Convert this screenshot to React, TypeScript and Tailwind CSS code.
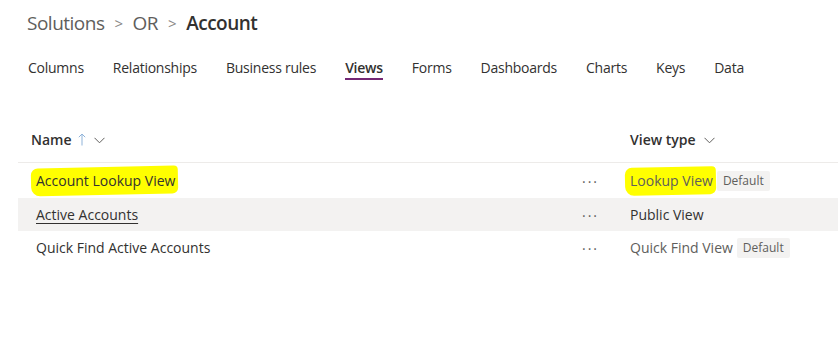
import React from 'react';

const TABS = ['Columns', 'Relationships', 'Business rules', 'Views', 'Forms', 'Dashboards', 'Charts', 'Keys', 'Data'];

type Row = { name: string; type: string; isDefault: boolean; highlight?: boolean; hovered?: boolean; typeMuted?: boolean };

const ROWS: Row[] = [
  { name: 'Account Lookup View', type: 'Lookup View', isDefault: true, highlight: true, typeMuted: true },
  { name: 'Active Accounts', type: 'Public View', isDefault: false, hovered: true },
  { name: 'Quick Find Active Accounts', type: 'Quick Find View', isDefault: true, typeMuted: true },
];

function ChevronDown() {
  return (
    <svg width="11" height="7" viewBox="0 0 11 7" fill="none" className="ml-[8px] mt-[1px]">
      <path d="M0.5 0.8 L5.5 5.8 L10.5 0.8" stroke="#605e5c" strokeWidth="1" />
    </svg>
  );
}

function SortUp() {
  return (
    <svg width="8" height="13" viewBox="0 0 8 13" fill="none" className="ml-[6px]">
      <path d="M4 12.5 V1 M0.8 4.2 L4 1 L7.2 4.2" stroke="#8fb3d9" strokeWidth="1" />
    </svg>
  );
}

function Marker({ children }: { children: React.ReactNode }) {
  return (
    <span className="relative inline-block">
      <span className="absolute left-[-5px] right-[-3px] top-[-3px] bottom-[-4px] bg-[#ffff00] rounded-[7px_4px_6px_9px] -rotate-[1.2deg]" />
      <span className="relative">{children}</span>
    </span>
  );
}

export default function App() {
  return (
    <div
      className="w-[838px] h-[361px] bg-white overflow-hidden pt-[9px]"
      style={{ fontFamily: '"Segoe UI", "Open Sans", sans-serif' }}
    >
      {/* Breadcrumb */}
      <div className="flex items-center pl-[27px] text-[19px] leading-[28px] tracking-[-0.5px] text-[#605e5c]">
        <span>Solutions</span>
        <span className="mx-[10px] text-[15px] text-[#8a8886]">&gt;</span>
        <span>OR</span>
        <span className="mx-[10px] text-[15px] text-[#8a8886]">&gt;</span>
        <span className="font-semibold text-[#323130]">Account</span>
      </div>

      {/* Tabs */}
      <div className="flex gap-[29px] pl-[28px] mt-[21px] text-[14px] leading-[20px] tracking-[-0.25px] text-[#323130]">
        {TABS.map((t) => (
          <div key={t} className="flex flex-col">
            <span className={t === 'Views' ? 'font-semibold' : ''}>{t}</span>
            <span className={t === 'Views' ? 'h-[2px] bg-[#742774]' : 'h-[2px]'} />
          </div>
        ))}
      </div>

      {/* Table */}
      <div className="ml-[18px] mt-[37px] text-[14px] text-[#323130]">
        <div className="flex items-center h-[46px] border-b border-[#edebe9] font-semibold">
          <div className="flex items-center w-[612px] pl-[13px]">
            <span>Name</span>
            <SortUp />
            <ChevronDown />
          </div>
          <div className="flex items-center">
            <span>View type</span>
            <ChevronDown />
          </div>
        </div>

        {ROWS.map((r, i) => (
          <div
            key={r.name}
            className={`flex items-center ${i === 0 ? 'h-[35px]' : 'h-[33px]'} ${r.hovered ? 'bg-[#f3f2f1]' : ''}`}
          >
            <div className="w-[564px] pl-[18px]">
              {r.highlight ? (
                <Marker>{r.name}</Marker>
              ) : (
                <span className={r.hovered ? 'underline underline-offset-[3px]' : ''}>{r.name}</span>
              )}
            </div>
            <div className="w-[48px] text-[#605e5c] tracking-[2px] leading-[10px] pb-[6px]">...</div>
            <div className="flex items-center">
              <span className={r.typeMuted ? 'text-[#605e5c]' : 'text-[#323130]'}>
                {r.highlight ? <Marker>{r.type}</Marker> : r.type}
              </span>
              {r.isDefault && (
                <span className="ml-[4px] h-[20px] px-[6px] flex items-center bg-[#f3f2f1] text-[12px] text-[#605e5c] rounded-[2px]">
                  Default
                </span>
              )}
            </div>
          </div>
        ))}
      </div>
    </div>
  );
}
